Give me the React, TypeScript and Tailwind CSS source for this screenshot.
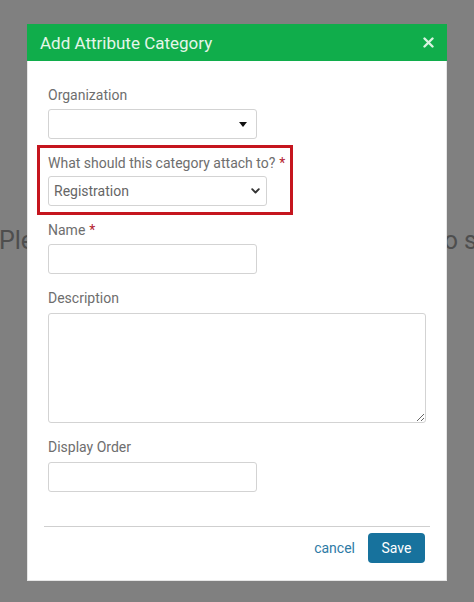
import React from "react";

const font = { fontFamily: "Roboto, 'Noto Sans', Arial, sans-serif" };

function Label({ children, required }: { children: React.ReactNode; required?: boolean }) {
  return (
    <div className="h-[20px] text-[14px] leading-[20px] text-[#6e6e6e] whitespace-nowrap">
      {children}
      {required && <span className="ml-[4px] text-[#b5242f]">*</span>}
    </div>
  );
}

function Box({ className }: { className: string }) {
  return <div className={`rounded-[3px] border border-[#d3d3d3] bg-white ${className}`} />;
}

export default function App() {
  return (
    <div className="relative w-[474px] h-[602px] overflow-hidden bg-[#808080]" style={font}>
      <div className="pt-[226px] flex justify-between whitespace-nowrap text-[25px] leading-[30px] text-[#4e4e4e]">
        <span className="-ml-[1px]">Please select</span>
        <span className="-mr-[3px]">to s</span>
      </div>

      <div className="absolute left-[27px] top-[24px] w-[420px] h-[557px] bg-white border border-[#e6e6e6] flex flex-col">
        <div className="h-[37px] bg-[#10ad4b] flex items-center justify-between pl-[13px] pr-[12px] -mx-px -mt-px">
          <span className="text-[17px] text-[#e4f6e9] leading-[20px]">Add Attribute Category</span>
          <svg width="11" height="11" viewBox="0 0 11 11" className="mr-[1px]">
            <path d="M1.5 1.5 L9.5 9.5 M9.5 1.5 L1.5 9.5" stroke="#d9f4e1" strokeWidth="2.4" strokeLinecap="round" />
          </svg>
        </div>

        <div className="flex-1 flex flex-col px-[20px] pt-[24px]">
          <Label>Organization</Label>
          <div className="mt-[4px] relative w-[209px] h-[30px] rounded-[3px] border border-[#d3d3d3] bg-white flex items-center justify-end pr-[9px]">
            <svg width="8" height="5" viewBox="0 0 8 5">
              <path d="M0 0 L8 0 L4 5 Z" fill="#111" />
            </svg>
          </div>

          <div className="mt-[6px] -ml-[11px] w-fit border-[3px] border-[#c5151e] pl-[8px] pr-[5px] pt-[5px] pb-[6px]">
            <Label required>What should this category attach to?</Label>
            <div className="mt-[3px] w-[219px] h-[30px] rounded-[3px] border border-[#d3d3d3] bg-white flex items-center justify-between pl-[5px] pr-[6px]">
              <span className="text-[14px] text-[#666666]">Registration</span>
              <svg width="9" height="6" viewBox="0 0 9 6">
                <path d="M1.2 1.2 L4.5 4.5 L7.8 1.2" stroke="#333" strokeWidth="1.9" fill="none" strokeLinecap="round" strokeLinejoin="round" />
              </svg>
            </div>
          </div>

          <div className="mt-[5px]">
            <Label required>Name</Label>
          </div>
          <Box className="mt-[4px] w-[209px] h-[30px]" />

          <div className="mt-[14px]">
            <Label>Description</Label>
          </div>
          <textarea className="mt-[5px] block w-[378px] h-[110px] rounded-[3px] border border-[#d3d3d3] bg-white outline-none" />

          <div className="mt-[14px]">
            <Label>Display Order</Label>
          </div>
          <Box className="mt-[5px] w-[209px] h-[30px]" />
        </div>

        <div className="mx-[16px] border-t border-[#cfcfcf]" />
        <div className="flex justify-end items-center gap-[13px] pt-[6px] pb-[17px] pr-[21px]">
          <span className="text-[14px] text-[#2e7ba6]">cancel</span>
          <div className="h-[30px] w-[57px] rounded-[4px] bg-[#17729d] text-white text-[14px] flex items-center justify-center">
            Save
          </div>
        </div>
      </div>
    </div>
  );
}
